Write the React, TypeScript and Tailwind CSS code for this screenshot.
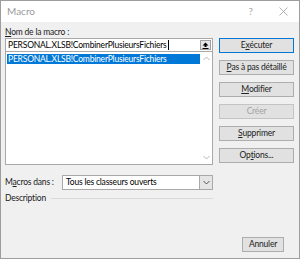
import React from "react";

const font = "font-['Lato','Noto_Sans',sans-serif]";

function U({ children }: { children: React.ReactNode }) {
    return <span className="underline underline-offset-[1px] decoration-[0.5px]">{children}</span>;
}

interface BtnProps {
    children: React.ReactNode;
    primary?: boolean;
    disabled?: boolean;
    className?: string;
}

function Btn({ children, primary, disabled, className }: BtnProps) {
    const border = primary ? "border-[#0078d7] border-[1.5px]" : disabled ? "border-[#c4c4c4]" : "border-[#adadad]";
    const text = disabled ? "text-[#a3a3a3]" : "text-[#222]";
    return (
        <div className={`flex items-center justify-center h-[15px] border bg-[#e1e1e1] text-[8.5px] tracking-[-0.2px] leading-none whitespace-nowrap ${border} ${text} ${className ?? ""}`}>
            {children}
        </div>
    );
}

function Chevron({ up, color = "#b5b5b5" }: { up?: boolean; color?: string }) {
    return (
        <svg width="7" height="5" viewBox="0 0 7 5">
            <path d={up ? "M0.5 4 L3.5 1 L6.5 4" : "M0.5 1 L3.5 4 L6.5 1"} stroke={color} strokeWidth="1" fill="none" />
        </svg>
    );
}

export default function App() {
    return (
        <div className={`w-[300px] h-[259px] flex flex-col border border-[#9d9d9d] bg-[#f0f0f0] text-[#1a1a1a] text-[8.5px] tracking-[-0.2px] ${font}`}>
            {/* title bar */}
            <div className="h-[21px] bg-white flex items-center pl-[6px] pr-[11px] shrink-0 tracking-normal">
                <span className="text-[10px] text-[#9a9a9a]">Macro</span>
                <span className="ml-auto text-[10px] text-[#a8a8a8] mr-[26px]">?</span>
                <svg width="9" height="9" viewBox="0 0 9 9">
                    <path d="M0.5 0.5 L8.5 8.5 M8.5 0.5 L0.5 8.5" stroke="#a8a8a8" strokeWidth="0.9" />
                </svg>
            </div>

            <div className="flex-1 flex flex-col pl-[4px] pr-[5px] pt-[5px] pb-[6px]">
                <div className="flex gap-[6px]">
                    {/* left column */}
                    <div className="w-[208px] flex flex-col">
                        <div className="h-[11px] leading-[11px] whitespace-nowrap">
                            <U>N</U>om de la macro :
                        </div>
                        <div className="h-[14px] flex items-center bg-white border border-[#a9a9a9]">
                            <span className="pl-[2px] leading-none text-black whitespace-nowrap">PERSONAL.XLSB!CombinerPlusieursFichiers</span>
                            <span className="w-px h-[10px] bg-black ml-[1px]"></span>
                            <div className="ml-auto mr-[1px] w-[11px] h-[10px] bg-[#e6e6e6] border border-[#a0a0a0] flex items-center justify-center">
                                <svg width="7" height="7" viewBox="0 0 7 7">
                                    <path d="M3.5 0.5 L6.5 3.5 L4.5 3.5 L4.5 5 L2.5 5 L2.5 3.5 L0.5 3.5 Z" fill="#000" />
                                    <path d="M0.5 6.5 L6.5 6.5" stroke="#000" strokeWidth="1" />
                                </svg>
                            </div>
                        </div>
                        <div className="-mt-px h-[114px] bg-white border border-[#a9a9a9] flex p-px">
                            <div className="flex-1">
                                <div className="h-[10px] mt-px bg-[#0078d7] text-white leading-[10px] pl-[1px] whitespace-nowrap">
                                    PERSONAL.XLSB!CombinerPlusieursFichiers
                                </div>
                            </div>
                            <div className="w-[10px] flex flex-col items-center justify-between py-[3px] ml-px">
                                <Chevron up />
                                <Chevron />
                            </div>
                        </div>

                        <div className="mt-[10px] h-[15px] flex items-center">
                            <span className="leading-none whitespace-nowrap">M<U>a</U>cros dans :</span>
                            <div className="ml-auto w-[151px] h-[15px] bg-white border border-[#a9a9a9] flex items-center">
                                <span className="pl-[3px] leading-none text-black whitespace-nowrap">Tous les classeurs ouverts</span>
                                <div className="ml-auto w-[13px] h-full bg-[#e5e5e5] border-l border-[#a9a9a9] flex items-center justify-center">
                                    <Chevron color="#555" />
                                </div>
                            </div>
                        </div>

                        <div className="mt-[2px] h-[12px] flex items-center gap-[5px]">
                            <span className="leading-none whitespace-nowrap">Description</span>
                            <div className="flex-1 h-px bg-[#d9d9d9]"></div>
                        </div>
                    </div>

                    {/* right column */}
                    <div className="w-[75px] mt-[11px] flex flex-col gap-[7px]">
                        <Btn primary>E<U>x</U>écuter</Btn>
                        <Btn><U>P</U>as à pas détaillé</Btn>
                        <Btn><U>M</U>odifier</Btn>
                        <Btn disabled>Créer</Btn>
                        <Btn><U>S</U>upprimer</Btn>
                        <Btn>Op<U>t</U>ions...</Btn>
                    </div>
                </div>

                <div className="mt-auto flex justify-end pr-[10px]">
                    <Btn className="w-[42px]">Annuler</Btn>
                </div>
            </div>
        </div>
    );
}
